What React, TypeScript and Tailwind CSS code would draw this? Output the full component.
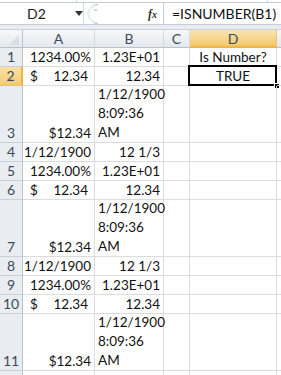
import React from "react";

type Cell =
  | { kind: "r"; t: string }
  | { kind: "c"; t: string }
  | { kind: "acct"; t: string }
  | { kind: "wrap"; lines: string[] }
  | null;

type Row = { n: number; h: number; a: Cell; b: Cell; d: Cell };

const pct: Cell = { kind: "r", t: "1234.00%" };
const sci: Cell = { kind: "r", t: "1.23E+01" };
const acct: Cell = { kind: "acct", t: "12.34" };
const num: Cell = { kind: "r", t: "12.34" };
const cur: Cell = { kind: "r", t: "$12.34" };
const wrap: Cell = { kind: "wrap", lines: ["1/12/1900", "8:09:36", "AM"] };
const date: Cell = { kind: "r", t: "1/12/1900" };
const frac: Cell = { kind: "r", t: "12 1/3" };

const rows: Row[] = [
  { n: 1, h: 19, a: pct, b: sci, d: { kind: "c", t: "Is Number?" } },
  { n: 2, h: 19, a: acct, b: num, d: { kind: "c", t: "TRUE" } },
  { n: 3, h: 57, a: cur, b: wrap, d: null },
  { n: 4, h: 19, a: date, b: frac, d: null },
  { n: 5, h: 19, a: pct, b: sci, d: null },
  { n: 6, h: 19, a: acct, b: num, d: null },
  { n: 7, h: 57, a: cur, b: wrap, d: null },
  { n: 8, h: 19, a: date, b: frac, d: null },
  { n: 9, h: 19, a: pct, b: sci, d: null },
  { n: 10, h: 19, a: acct, b: num, d: null },
  { n: 11, h: 57, a: cur, b: wrap, d: null },
  { n: 12, h: 19, a: date, b: frac, d: null },
];

function CellView({ c, w, selected }: { c: Cell; w: string; selected?: boolean }) {
  let inner: React.ReactNode = null;
  if (c) {
    if (c.kind === "r") inner = <div className="w-full text-right pr-[3px] whitespace-nowrap">{c.t}</div>;
    else if (c.kind === "c") inner = <div className="w-full text-center whitespace-nowrap">{c.t}</div>;
    else if (c.kind === "acct")
      inner = (
        <div className="w-full flex justify-between pl-[7px] pr-[6px]">
          <span>$</span>
          <span>{c.t}</span>
        </div>
      );
    else if (c.kind === "wrap")
      inner = (
        <div className="w-full pl-[3px] flex flex-col whitespace-nowrap">
          {c.lines.map((l) => (
            <div key={l} className="h-[19px]">{l}</div>
          ))}
        </div>
      );
  }
  return (
    <div
      className={`${w} relative shrink-0 h-full border-r border-b border-[#dadcdd] flex items-end leading-[18px]`}
    >
      {inner}
      {selected && (
        <>
          <div className="absolute left-[-2px] top-[-2px] right-[-1px] bottom-[-1px] border-2 border-black pointer-events-none" />
          <div className="absolute right-[-4px] bottom-[-4px] w-[6px] h-[6px] bg-black border border-white" />
        </>
      )}
    </div>
  );
}

export default function App() {
  return (
    <div
      className="w-[281px] h-[375px] overflow-hidden bg-white text-[13.5px] text-[#111]"
      style={{ fontFamily: "Lato, 'Open Sans', sans-serif" }}
    >
      {/* ribbon remnant */}
      <div className="h-[3px] bg-white border-b border-[#c5ccd6] flex">
        <div className="w-[77px] border-r border-[#d5d9df]" />
        <div className="w-[191px] border-r border-[#d5d9df]" />
      </div>
      {/* formula bar */}
      <div className="h-[22px] flex items-center bg-white border-b border-[#c5ccd6]">
        <div className="w-[84px] h-full flex items-center border-r border-[#d4d9e0]">
          <span className="ml-[27px] text-[#222] text-[14px]">D2</span>
          <svg width="8" height="5" viewBox="0 0 8 5" className="ml-[29px]">
            <path d="M0 0 L8 0 L4 5 Z" fill="#333" />
          </svg>
        </div>
        <div className="w-[80px] h-full flex items-center relative border-r border-[#c5ccd6] bg-white">
          <svg width="20" height="22" viewBox="0 0 20 22" className="ml-[1px]">
            <path d="M13 1.5 A9.5 9.5 0 0 0 13 20.5" stroke="#c9ced6" strokeWidth="1.5" fill="none" />
            <path d="M11 3 A8 8 0 0 0 11 19" stroke="#eef0f3" strokeWidth="2" fill="none" />
            <rect x="9" y="6" width="3" height="2" fill="#d2d6dc" />
          </svg>
          <span
            className="absolute left-[64px] top-[2px] text-[12px] italic font-semibold text-[#333]"
            style={{ fontFamily: "'Liberation Serif', serif" }}
          >
            f<span className="text-[10px]">x</span>
          </span>
        </div>
        <div className="pl-[8px] text-[#111] text-[14px]">=ISNUMBER(B1)</div>
      </div>
      {/* gap band */}
      <div className="h-[5px] bg-[#e9edf2] border-b border-[#c9d2dc]" />
      {/* column headers */}
      <div className="h-[18px] flex text-[#3c4b5e] text-[14px] bg-gradient-to-b from-[#f7f8fa] to-[#e3e7ec]">
        <div className="w-[23px] shrink-0 h-full border-r border-b border-[#b7c2ce] relative">
          <svg width="10" height="10" viewBox="0 0 10 10" className="absolute right-[3px] bottom-[2px]">
            <path d="M10 0 L10 10 L0 10 Z" fill="#d9dee5" />
          </svg>
        </div>
        {[
          ["A", "w-[72px]", false],
          ["B", "w-[69px]", false],
          ["C", "w-[26px]", false],
          ["D", "w-[87px]", true],
          ["", "w-[10px]", false],
        ].map(([l, w, hi]) => (
          <div
            key={String(l) + String(w)}
            className={`${w} shrink-0 h-full flex items-center justify-center border-r ${
              hi
                ? "bg-gradient-to-b from-[#fae6b4] to-[#f2c867] border-b-2 border-b-[#f0b541] border-r-[#e9c476]"
                : "border-b border-[#b7c2ce] border-r-[#d3d9e0]"
            }`}
          >
            {l}
          </div>
        ))}
      </div>
      {/* rows */}
      {rows.map((r) => (
        <div key={r.n} className="flex" style={{ height: r.h }}>
          <div
            className={`w-[23px] shrink-0 h-full flex items-end justify-center leading-[18px] text-[14px] text-[#3c4b5e] border-b border-r ${
              r.n === 2
                ? "bg-gradient-to-b from-[#f9e2a8] to-[#f3cb6c] border-b-[#e9c476] border-r-2 border-r-[#f0b541]"
                : "bg-[#e9ecf0] border-b-[#c9d0d9] border-r-[#b7c2ce]"
            }`}
          >
            {r.n}
          </div>
          <CellView c={r.a} w="w-[72px]" />
          <CellView c={r.b} w="w-[69px]" />
          <CellView c={null} w="w-[26px]" />
          <CellView c={r.d} w="w-[87px]" selected={r.n === 2} />
          <CellView c={null} w="w-[10px]" />
        </div>
      ))}
    </div>
  );
}
